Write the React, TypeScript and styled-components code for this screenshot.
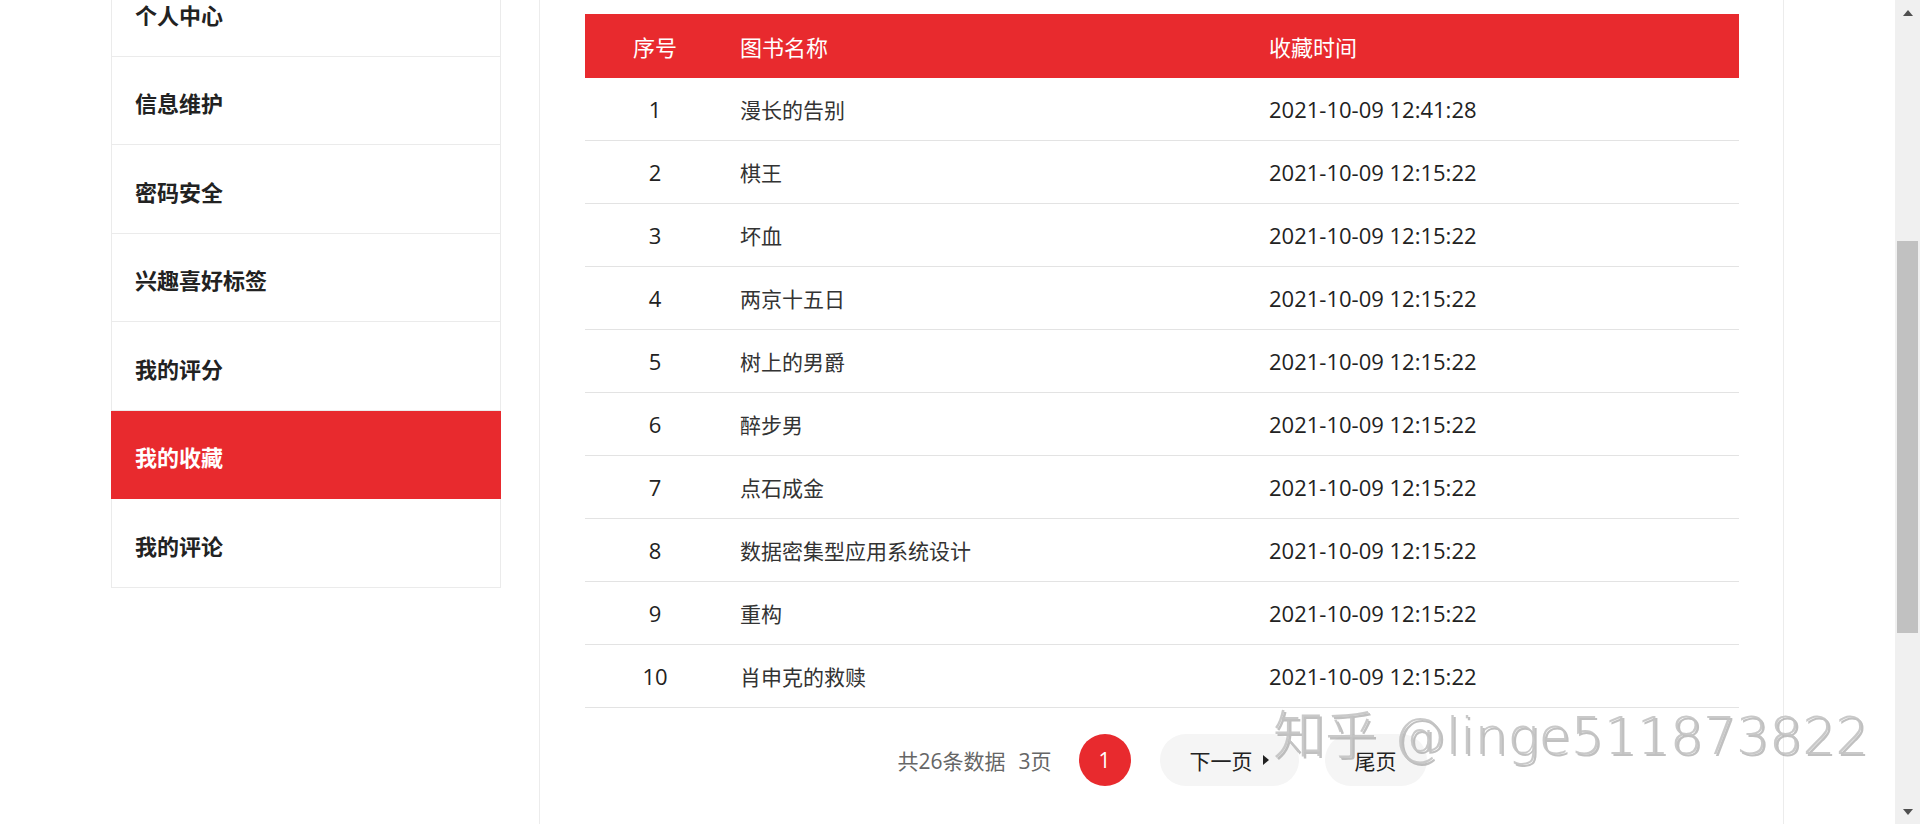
import styled, { createGlobalStyle } from 'styled-components'

const RED = '#e82a2e'

const menu = ['个人中心', '信息维护', '密码安全', '兴趣喜好标签', '我的评分', '我的收藏', '我的评论']

const books = [
  { id: 1, name: '漫长的告别', time: '2021-10-09 12:41:28' },
  { id: 2, name: '棋王', time: '2021-10-09 12:15:22' },
  { id: 3, name: '坏血', time: '2021-10-09 12:15:22' },
  { id: 4, name: '两京十五日', time: '2021-10-09 12:15:22' },
  { id: 5, name: '树上的男爵', time: '2021-10-09 12:15:22' },
  { id: 6, name: '醉步男', time: '2021-10-09 12:15:22' },
  { id: 7, name: '点石成金', time: '2021-10-09 12:15:22' },
  { id: 8, name: '数据密集型应用系统设计', time: '2021-10-09 12:15:22' },
  { id: 9, name: '重构', time: '2021-10-09 12:15:22' },
  { id: 10, name: '肖申克的救赎', time: '2021-10-09 12:15:22' },
]

export default function App() {
  return (
    <>
      <GlobalStyle />
      <Window>
        <Viewport>
          <Page>
            <Sidebar>
              {menu.map((item) => (
                <MenuItem key={item} $active={item === '我的收藏'}>{item}</MenuItem>
              ))}
            </Sidebar>

            <Panel>
              <Table>
                <HeadRow>
                  <Cell $center>序号</Cell>
                  <Cell>图书名称</Cell>
                  <Cell>收藏时间</Cell>
                </HeadRow>
                {books.map((b) => (
                  <Row key={b.id}>
                    <Cell $center $num>{b.id}</Cell>
                    <Cell>{b.name}</Cell>
                    <Cell $num>{b.time}</Cell>
                  </Row>
                ))}
              </Table>

              <Pager>
                <Info>共26条数据</Info>
                <Info>3页</Info>
                <PageNum>1</PageNum>
                <PageButton>
                  下一页
                  <svg width="6" height="10" viewBox="0 0 6 10">
                    <path d="M0 0 L6 5 L0 10 Z" fill="#222" />
                  </svg>
                </PageButton>
                <PageButton>尾页</PageButton>
              </Pager>
            </Panel>
          </Page>

          <Watermark>知乎 @linge511873822</Watermark>
        </Viewport>

        <Scrollbar>
          <ScrollArrow>
            <svg width="10" height="6" viewBox="0 0 10 6">
              <path d="M0 6 L5 0 L10 6 Z" fill="#505050" />
            </svg>
          </ScrollArrow>
          <Track>
            <Thumb />
          </Track>
          <ScrollArrow>
            <svg width="10" height="6" viewBox="0 0 10 6">
              <path d="M0 0 L5 6 L10 0 Z" fill="#505050" />
            </svg>
          </ScrollArrow>
        </Scrollbar>
      </Window>
    </>
  )
}

const GlobalStyle = createGlobalStyle`
  html, body {
    margin: 0;
    padding: 0;
    overflow: hidden;
    background: #fff;
  }
  body {
    font-family: "Open Sans", "Noto Sans CJK SC", sans-serif;
    color: #333;
  }
  * { box-sizing: border-box; }
`

const Window = styled.div`
  display: flex;
  height: 100vh;
  width: 100vw;
`
const Viewport = styled.div`
  position: relative;
  flex: 1;
  overflow: hidden;
`
const Page = styled.div`
  display: flex;
  align-items: flex-start;
  gap: 38px;
  width: 1673px;
  margin: -33px auto 0;
`
// ---------------------------------
const Sidebar = styled.ul`
  width: 390px;
  margin: 0;
  padding: 0;
  list-style: none;
  border: 1px solid #ebebeb;
  border-bottom: none;
`
const MenuItem = styled.li<{ $active?: boolean }>`
  display: flex;
  align-items: center;
  height: 88.5px;
  padding-left: 23px;
  margin: 0 ${(p) => (p.$active ? '-1px' : '0')};
  padding-left: ${(p) => (p.$active ? '24px' : '23px')};
  border-bottom: 1px solid ${(p) => (p.$active ? RED : '#ebebeb')};
  background: ${(p) => (p.$active ? RED : '#fff')};
  color: ${(p) => (p.$active ? '#fff' : '#222')};
  font-family: "Noto Sans CJK SC", sans-serif;
  font-size: 22px;
  font-weight: 700;
  padding-top: 4px;
`
// ---------------------------------
const Panel = styled.section`
  flex: 1;
  min-height: 1000px;
  padding: 47px 44px 0 45px;
  border-left: 1px solid #ececec;
  border-right: 1px solid #ececec;
`
const Table = styled.div`
  display: flex;
  flex-direction: column;
`
const HeadRow = styled.div`
  display: grid;
  grid-template-columns: 140px 529px 1fr;
  align-items: center;
  height: 64px;
  background: ${RED};
  color: #fff;
  font-size: 22px;
`
const Row = styled.div`
  display: grid;
  grid-template-columns: 140px 529px 1fr;
  align-items: center;
  height: 63px;
  border-bottom: 1px solid #e3e3e3;
  font-size: 21px;
  color: #333;
`
const Cell = styled.div<{ $center?: boolean; $num?: boolean }>`
  text-align: ${(p) => (p.$center ? 'center' : 'left')};
  padding-left: ${(p) => (p.$center ? '0' : '15px')};
  font-size: ${(p) => (p.$num ? '22px' : 'inherit')};
  color: ${(p) => (p.$num ? '#222' : 'inherit')};
  white-space: nowrap;
`
// ---------------------------------
const Pager = styled.div`
  display: flex;
  justify-content: center;
  align-items: center;
  margin-top: 26px;
  height: 52px;
  font-size: 21px;
`
const Info = styled.span`
  color: #666;
  margin-right: 13px;
  &:nth-child(2) { margin-right: 27px; }
`
const PageNum = styled.span`
  display: flex;
  align-items: center;
  justify-content: center;
  width: 52px;
  height: 52px;
  border-radius: 50%;
  background: ${RED};
  color: #fff;
  margin-right: 29px;
`
const PageButton = styled.span`
  display: flex;
  align-items: center;
  gap: 10px;
  height: 52px;
  padding: 0 30px;
  border-radius: 26px;
  background: #f5f5f5;
  color: #222;
  & + & { margin-left: 26px; }
`
// ---------------------------------
const Watermark = styled.div`
  position: absolute;
  left: 1273px;
  top: 710px;
  font-family: "DejaVu Sans", "Noto Sans CJK SC", sans-serif;
  font-weight: 300;
  font-size: 52px;
  line-height: 52px;
  white-space: nowrap;
  color: rgba(195, 195, 195, 0.9);
  text-shadow: 2px 2px 0 rgba(140, 140, 140, 0.55);
  pointer-events: none;
`
// ---------------------------------
const Scrollbar = styled.div`
  display: flex;
  flex-direction: column;
  width: 25px;
  height: 100%;
  background: #f0f0f0;
`
const ScrollArrow = styled.div`
  display: flex;
  align-items: center;
  justify-content: center;
  height: 25px;
`
const Track = styled.div`
  flex: 1;
  padding: 216px 2px 0;
`
const Thumb = styled.div`
  height: 392px;
  background: #c1c1c1;
`
